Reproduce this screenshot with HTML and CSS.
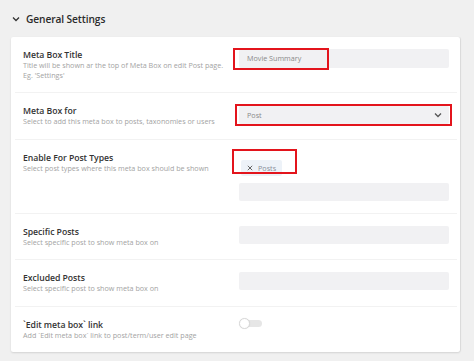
FILE: index.html
```html
<!DOCTYPE html>
<html>
<head>
<meta charset="utf-8">
<link rel="stylesheet" href="styles.css">
</head>
<body>
<div class="page">
  <div class="section-head">
    <svg class="chev" width="8" height="6" viewBox="0 0 8 6"><path d="M1 1.5 L4 4.5 L7 1.5" fill="none" stroke="#333" stroke-width="1.3"/></svg>
    <span>General Settings</span>
  </div>
  <div class="card">
    <div class="row r1">
      <div class="label">
        <div class="title">Meta Box Title</div>
        <div class="desc">Title will be shown ar the top of Meta Box on edit Post page.<br>Eg. 'Settings'</div>
      </div>
      <div class="field">
        <div class="input">Movie Summary</div>
        <div class="mark mark1"></div>
      </div>
    </div>
    <div class="row">
      <div class="label">
        <div class="title">Meta Box for</div>
        <div class="desc">Select to add this meta box to posts, taxonomies or users</div>
      </div>
      <div class="field">
        <div class="input select">Post
          <svg class="sel-chev" width="8" height="6" viewBox="0 0 8 6"><path d="M1 1.5 L4 4.5 L7 1.5" fill="none" stroke="#555" stroke-width="1.3"/></svg>
        </div>
        <div class="mark mark2"></div>
      </div>
    </div>
    <div class="row r3">
      <div class="label">
        <div class="title">Enable For Post Types</div>
        <div class="desc">Select post types where this meta box should be shown</div>
      </div>
      <div class="field">
        <div class="tagwrap">
          <span class="tag"><svg class="x" width="6" height="6" viewBox="0 0 6 6"><path d="M0.8 0.8 L5.2 5.2 M5.2 0.8 L0.8 5.2" stroke="#666" stroke-width="1"/></svg>Posts</span>
          <div class="mark mark3"></div>
        </div>
        <div class="input gap"></div>
      </div>
    </div>
    <div class="row">
      <div class="label">
        <div class="title">Specific Posts</div>
        <div class="desc">Select specific post to show meta box on</div>
      </div>
      <div class="field">
        <div class="input"></div>
      </div>
    </div>
    <div class="row">
      <div class="label">
        <div class="title">Excluded Posts</div>
        <div class="desc">Select specific post to show meta box on</div>
      </div>
      <div class="field">
        <div class="input"></div>
      </div>
    </div>
    <div class="row last">
      <div class="label">
        <div class="title">`Edit meta box` link</div>
        <div class="desc">Add `Edit meta box` link to post/term/user edit page</div>
      </div>
      <div class="field">
        <div class="toggle"><span class="knob"></span></div>
      </div>
    </div>
  </div>
</div>
</body>
</html>
```

FILE: styles.css
```css
html, body {
  margin: 0;
  padding: 0;
  background: #f0f0f0;
}
body {
  font-family: "Open Sans", "Noto Sans", sans-serif;
  width: 474px;
  height: 361px;
  overflow: hidden;
}
.page {
  padding: 11px 14px 0 11px;
}
.section-head {
  display: flex;
  align-items: center;
  height: 15px;
  padding-left: 1px;
  font-size: 10.2px;
  letter-spacing: -0.1px;
  font-weight: 600;
  color: #2b2b2b;
  margin-bottom: 11px;
}
.chev {
  margin-right: 6px;
}
.card {
  background: #fff;
  width: 449px;
  box-shadow: 0 1px 2px rgba(0,0,0,0.12), 1px 0 1px rgba(0,0,0,0.06);
  border-radius: 2px;
}
.row {
  display: flex;
  justify-content: space-between;
  margin: 0 3px 0 4px;
  padding: 12px 8px 12px 8px;
  border-bottom: 1px solid #f2f2f2;
}
.row.last {
  border-bottom: none;
}
.label {
  width: 210px;
}
.title {
  font-size: 8.7px;
  letter-spacing: -0.05px;
  font-weight: 600;
  color: #333;
  line-height: 12px;
}
.desc {
  font-size: 7.2px;
  color: #a3a3a3;
  line-height: 9.5px;
}
.field {
  position: relative;
  width: 210px;
}
.input {
  height: 18px;
  background: #f1f1f3;
  border-radius: 2px;
  font-size: 7.2px;
  color: #8a8a8a;
  line-height: 18px;
  padding-left: 8px;
  box-sizing: border-box;
}
.r1 .input {
  height: 19px;
  line-height: 19px;
}
.select {
  display: flex;
  justify-content: space-between;
  align-items: center;
  margin-top: 1px;
  padding-right: 7px;
}
.tagwrap {
  position: relative;
  padding-top: 2px;
  padding-left: 2px;
  height: 18px;
}
.tag {
  display: inline-flex;
  align-items: center;
  height: 16px;
  padding: 0 6px 0 6px;
  background: #edf2f8;
  border-radius: 2px;
  font-size: 7.2px;
  color: #8a9099;
}
.tag .x {
  margin-right: 5px;
}
.input.gap {
  margin-top: 11px;
}
.mark {
  position: absolute;
  border: 2px solid #e3141c;
  box-sizing: border-box;
}
.mark1 {
  left: -6px;
  top: -1px;
  width: 96px;
  height: 22px;
}
.mark2 {
  left: -4px;
  top: -1px;
  width: 217px;
  height: 22px;
}
.mark3 {
  left: -7px;
  top: -3px;
  width: 65px;
  height: 25px;
}
.toggle {
  position: relative;
  margin-top: -1px;
  width: 24px;
  height: 11px;
}
.toggle::before {
  content: "";
  position: absolute;
  left: 4px;
  top: 2px;
  width: 19px;
  height: 7px;
  border-radius: 4px;
  background: #e6e6e6;
}
.knob {
  position: absolute;
  left: 0;
  top: 0;
  width: 11px;
  height: 11px;
  border-radius: 50%;
  background: #fff;
  box-sizing: border-box;
  border: 1px solid #d8d8d8;
  box-shadow: 0 0 1px rgba(0,0,0,0.1);
}
```
